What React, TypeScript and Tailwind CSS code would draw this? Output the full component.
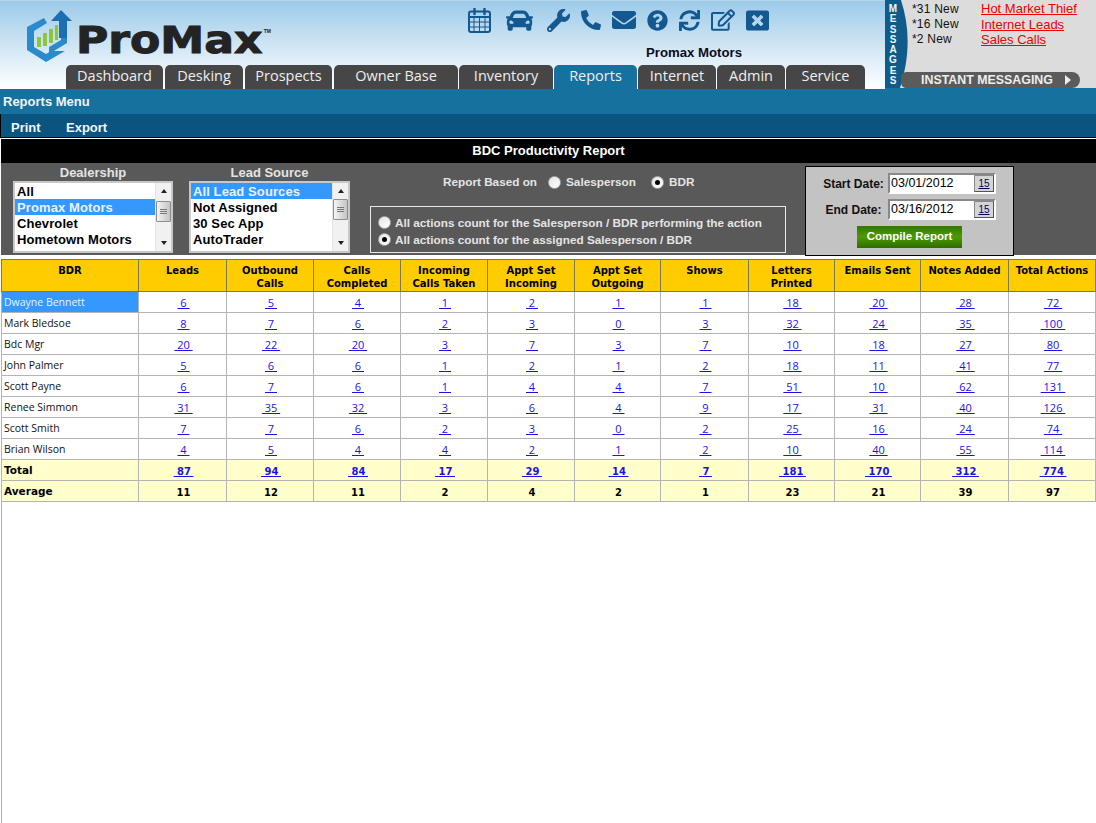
import { FaCar, FaWrench, FaPhoneAlt, FaEnvelope, FaQuestionCircle, FaSync, FaRegEdit, FaWindowClose } from "react-icons/fa";

const tabs = [
  { label: "Dashboard", w: "w-[97px] mr-px" },
  { label: "Desking", w: "w-[78px] mr-px" },
  { label: "Prospects", w: "w-[87px] mr-px" },
  { label: "Owner Base", w: "w-[124px]" },
  { label: "Inventory", w: "w-[94px]" },
  { label: "Reports", w: "w-[83px]", active: true },
  { label: "Internet", w: "w-[78px]" },
  { label: "Admin", w: "w-[68px]" },
  { label: "Service", w: "w-[79px]" },
];

const columns = [
  ["BDR", "w-[137px]"],
  ["Leads", "w-[88px]"],
  ["Outbound\nCalls", "w-[87px]"],
  ["Calls\nCompleted", "w-[87px]"],
  ["Incoming\nCalls Taken", "w-[87px]"],
  ["Appt Set\nIncoming", "w-[87px]"],
  ["Appt Set\nOutgoing", "w-[86px]"],
  ["Shows", "w-[88px]"],
  ["Letters\nPrinted", "w-[86px]"],
  ["Emails Sent", "w-[86px]"],
  ["Notes Added", "w-[88px]"],
  ["Total Actions", "w-[87px]"],
];

const rows: [string, number[]][] = [
  ["Dwayne Bennett", [6, 5, 4, 1, 2, 1, 1, 18, 20, 28, 72]],
  ["Mark Bledsoe", [8, 7, 6, 2, 3, 0, 3, 32, 24, 35, 100]],
  ["Bdc Mgr", [20, 22, 20, 3, 7, 3, 7, 10, 18, 27, 80]],
  ["John Palmer", [5, 6, 6, 1, 2, 1, 2, 18, 11, 41, 77]],
  ["Scott Payne", [6, 7, 6, 1, 4, 4, 7, 51, 10, 62, 131]],
  ["Renee Simmon", [31, 35, 32, 3, 6, 4, 9, 17, 31, 40, 126]],
  ["Scott Smith", [7, 7, 6, 2, 3, 0, 2, 25, 16, 24, 74]],
  ["Brian Wilson", [4, 5, 4, 4, 2, 1, 2, 10, 40, 55, 114]],
];

const totals = [87, 94, 84, 17, 29, 14, 7, 181, 170, 312, 774];
const averages = [11, 12, 11, 2, 4, 2, 1, 23, 21, 39, 97];

function Logo() {
  return (
    <svg width="50" height="54" viewBox="0 0 50 54" className="shrink-0">
      <path d="M19 8 L2 17 L2 40 L21 52 L40 41 L26 41 L21 44 L9 37 L9 21 L22 13 Z" fill="#2a8acb" />
      <path d="M24 44 L42 33 L42 15 L36 15 L36 30 L24 37 Z" fill="#2a8acb" />
      <path d="M36 0 L47 11 L42 11 L42 28 L34 28 L34 11 L26 11 Z" fill="#1c70b2" />
      <rect x="12" y="27" width="4" height="10" fill="#8cc63f" />
      <rect x="18" y="23" width="4" height="13" fill="#8cc63f" />
      <rect x="24" y="19" width="4" height="14" fill="#8cc63f" />
      <rect x="30" y="15" width="3" height="15" fill="#8cc63f" />
    </svg>
  );
}

function CalendarIcon() {
  return (
    <svg width="23" height="25" viewBox="0 0 23 25" className="shrink-0" fill="none" stroke="#13588f">
      <rect x="1" y="3.5" width="21" height="20.5" rx="2" strokeWidth="2" />
      <path d="M1 9 H22" strokeWidth="2" />
      <path d="M1 14 H22 M1 19 H22 M6 9 V24 M11.5 9 V24 M17 9 V24" strokeWidth="1" />
      <path d="M6.5 1 V6 M16.5 1 V6" strokeWidth="2.5" strokeLinecap="round" />
    </svg>
  );
}

function Scrollbar({ thumb }: { thumb: string }) {
  return (
    <div className="w-[16px] h-full flex flex-col justify-between bg-[#f1f1f1] border-l border-[#e4e4e4]">
      <div className="h-[16px] flex items-center justify-center">
        <div className="w-0 h-0 border-x-[3px] border-x-transparent border-b-[4px] border-b-[#222]" />
      </div>
      <div className="flex-1 relative">
        <div className={`absolute left-0 right-0 h-[21px] bg-gradient-to-r from-[#f4f4f4] to-[#c4c4c4] border border-[#8e8e8e] rounded-[1px] flex flex-col items-center justify-center gap-[1px] ${thumb}`}>
          <div className="w-[7px] h-px bg-[#777]" />
          <div className="w-[7px] h-px bg-[#777]" />
          <div className="w-[7px] h-px bg-[#777]" />
        </div>
      </div>
      <div className="h-[16px] flex items-center justify-center">
        <div className="w-0 h-0 border-x-[3px] border-x-transparent border-t-[4px] border-t-[#222]" />
      </div>
    </div>
  );
}

function ListBox({ items, selected, thumb }: { items: string[]; selected: number; thumb: string }) {
  return (
    <div className="h-[72px] bg-white border-2 border-[#c8c8c8] flex overflow-hidden">
      <div className="flex-1 overflow-hidden">
        {items.map((item, i) => (
          <div
            key={item}
            className={`h-[16px] pt-px leading-[15px] px-[2px] text-[13px] tracking-[0.1px] font-bold whitespace-nowrap ${i === selected ? "bg-[#3399ff] text-[#e8f2ff]" : "text-black"}`}
          >
            {item}
          </div>
        ))}
      </div>
      <Scrollbar thumb={thumb} />
    </div>
  );
}

function Radio({ on }: { on?: boolean }) {
  return (
    <span className="w-[13px] h-[13px] rounded-full bg-gradient-to-br from-[#e4e4e4] to-white border border-[#a8a8a8] flex items-center justify-center shrink-0">
      {on && <span className="w-[5px] h-[5px] rounded-full bg-black" />}
    </span>
  );
}

function DateField({ label, value }: { label: string; value: string }) {
  return (
    <div className="flex items-center h-[21px]">
      <span className="w-[65px] mr-[2px] text-center text-[12px] font-bold text-[#111]">{label}</span>
      <div className="w-[108px] h-[21px] bg-white border-2 border-t-[#888] border-l-[#888] border-r-white border-b-white flex items-center justify-between">
        <span className="text-[12.5px] pl-px text-black">{value}</span>
        <span className="w-[20px] h-[17px] bg-[#d4d4d4] border border-[#888] border-r-[#555] border-b-[#555] flex items-center justify-center text-[10px] underline text-[#000050]">
          15
        </span>
      </div>
    </div>
  );
}

function CountLink({ value }: { value: number }) {
  return <a className="underline text-[#1c12e6] cursor-pointer whitespace-pre">{` ${value} `}</a>;
}

export default function App() {
  return (
    <div className="w-[1096px] h-[823px] overflow-hidden bg-white font-['Liberation_Sans',Arial,sans-serif] flex flex-col">
      <header className="h-[88px] flex shrink-0">
        <div className="w-[885px] h-[89px] flex flex-col bg-gradient-to-b from-[#9ccae9] via-[#cfe5f4] to-white border-t border-[#b7d6ee] z-10">
          <div className="h-[64px] flex relative">
            <div className="w-[446px] pl-[25px] pt-[9px] flex">
              <Logo />
              <div className="flex items-start">
                <span className="ml-[1px] mt-[8px] origin-left scale-x-[1.16] text-[38px] leading-[44px] font-bold text-[#232323] [-webkit-text-stroke:1px_#232323] font-['DejaVu_Sans',sans-serif]">ProMax</span>
                <span className="ml-[27px] mt-[18px] text-[5px] font-bold text-[#232323]">TM</span>
              </div>
            </div>
            <div className="flex-1 flex flex-col">
              <div className="flex items-center h-[24px] mt-[7px] pl-[22px] text-[#13588f]">
                <CalendarIcon />
                <FaCar className="w-[27px] h-[27px] ml-[15px] shrink-0" />
                <FaWrench className="w-[23px] h-[23px] ml-[14px]" />
                <FaPhoneAlt className="w-[20px] h-[20px] ml-[11px]" />
                <FaEnvelope className="w-[24px] h-[24px] ml-[11px]" />
                <FaQuestionCircle className="w-[21px] h-[21px] ml-[11px]" />
                <FaSync className="w-[21px] h-[21px] ml-[11px]" />
                <FaRegEdit className="w-[24px] h-[22px] ml-[11px]" />
                <FaWindowClose className="w-[23px] h-[25px] ml-[11px]" />
              </div>
              <div className="mt-[11px] ml-[200px] text-[13.2px] font-bold text-[#0c0c20] whitespace-nowrap">Promax Motors</div>
            </div>
          </div>
          <nav className="h-[24px] pl-[66px] flex gap-px font-['Open_Sans',sans-serif]">
            {tabs.map((tab) => (
              <div
                key={tab.label}
                className={`${tab.w} h-full pb-[2px] rounded-t-[5px] flex items-center justify-center text-[14.5px] text-[#eeeeee] ${tab.active ? "bg-[#17719f]" : "bg-[#464646]"}`}
              >
                {tab.label}
              </div>
            ))}
          </nav>
        </div>
        <aside className="flex-1 relative bg-[#dcdcdc] flex flex-col">
          <svg width="24" height="88" viewBox="0 0 24 88" className="absolute left-0 top-0">
            <path d="M0 0 H16 C25 28 25 56 15 88 H0 Z" fill="#0f5c8a" />
          </svg>
          <div className="absolute left-0 top-[4px] w-[16px] flex flex-col items-center text-[10px] leading-[10.3px] font-bold text-[#eef6fb]">
            {"MESSAGES".split("").map((c, i) => (
              <span key={i}>{c}</span>
            ))}
          </div>
          <div className="h-[72px] pl-[27px] pt-[2px] flex text-[12px] leading-[15px]">
            <div className="w-[69px] text-[#111] tracking-[0.2px]">
              <div>*31 New</div>
              <div>*16 New</div>
              <div>*2 New</div>
            </div>
            <div className="-mt-px text-[13px] leading-[15.5px] text-[#ee0000] underline">
              <div>Hot Market Thief</div>
              <div>Internet Leads</div>
              <div>Sales Calls</div>
            </div>
          </div>
          <div className="relative ml-[16px] w-[179px] h-[16px] bg-[#5b5b5b] rounded-r-[9px] rounded-l-[6px] flex items-center pl-[20px] text-[12.4px] font-bold text-[#eeeeee] whitespace-nowrap">
            INSTANT MESSAGING
            <span className="ml-[12px] w-0 h-0 border-y-[5px] border-y-transparent border-l-[6px] border-l-[#eeeeee]" />
          </div>
        </aside>
      </header>

      <div className="h-[26px] shrink-0 pt-px bg-[#17719f] pl-[3px] flex items-center text-[13px] font-bold text-[#eef6fb]">Reports Menu</div>
      <div className="h-[23px] shrink-0 pt-[5px] bg-[#0a5580] border-l border-black flex items-center pl-[10px] gap-[25px] text-[13px] font-bold text-[#eef6fb]">
        <span className="w-[30px]">Print</span>
        <span>Export</span>
      </div>
      <div className="h-px shrink-0 bg-black" />

      <main className="flex-1 pl-px flex flex-col">
        <div className="mt-px h-[24px] shrink-0 bg-black text-white text-[13px] font-bold flex items-center justify-center">BDC Productivity Report</div>
        <div className="h-[92px] shrink-0 bg-[#595959] flex pl-[12px]">
          <div className="w-[160px] pt-[2px]">
            <div className="h-[16px] text-center text-[13px] leading-[16px] font-bold text-[#e4e4e4]">Dealership</div>
            <ListBox items={["All", "Promax Motors", "Chevrolet", "Hometown Motors", "Honda"]} selected={1} thumb="top-[2px]" />
          </div>
          <div className="w-[161px] ml-[16px] pt-[2px]">
            <div className="h-[16px] text-center text-[13px] leading-[16px] font-bold text-[#e4e4e4]">Lead Source</div>
            <ListBox items={["All Lead Sources", "Not Assigned", "30 Sec App", "AutoTrader", "Autotrader Cert"]} selected={0} thumb="top-0" />
          </div>
          <div className="w-[416px] ml-[20px] flex flex-col text-[11.75px] font-bold text-[#e4e4e4]">
            <div className="h-[43px] pl-[73px] flex items-center pb-[5px]">
              <span>Report Based on</span>
              <span className="ml-[11px]"><Radio /></span>
              <span className="ml-[5px]">Salesperson</span>
              <span className="ml-[15px]"><Radio on /></span>
              <span className="ml-[5px]">BDR</span>
            </div>
            <div className="h-[47px] border border-[#e8e8e8] pl-[7px] pt-[9px] flex flex-col gap-[4px]">
              <div className="flex items-center gap-[4px] h-[13px]"><Radio />All actions count for the Salesperson / BDR performing the action</div>
              <div className="flex items-center gap-[4px] h-[13px]"><Radio on />All actions count for the assigned Salesperson / BDR</div>
            </div>
          </div>
          <div className="w-[209px] h-[90px] mt-[3px] ml-[19px] bg-[#c3c3c3] border border-black flex flex-col items-center pt-[6px]">
            <div className="pr-[2px] flex flex-col gap-[5px]">
              <DateField label="Start Date:" value="03/01/2012" />
              <DateField label="End Date:" value="03/16/2012" />
            </div>
            <div className="mt-[6px] w-[105px] h-[22px] bg-gradient-to-b from-[#2f7a00] via-[#4f9a00] to-[#2a6e00] flex items-center justify-center text-[11.5px] font-bold text-white">
              Compile Report
            </div>
          </div>
        </div>
        <div className="h-[4px] shrink-0" />
        <table className="table-fixed w-[1095px] border-collapse shrink-0 text-[11px] font-['DejaVu_Sans',sans-serif]">
          <colgroup>
            {columns.map(([label, w]) => (
              <col key={label} className={w} />
            ))}
          </colgroup>
          <thead>
            <tr className="h-[32px]">
              {columns.map(([label]) => (
                <th key={label} className="bg-[#ffcc00] border border-[#7a7a5a] align-top pt-[4px] px-[2px] text-[10px] leading-[13px] font-bold text-black whitespace-pre-line">
                  {label}
                </th>
              ))}
            </tr>
          </thead>
          <tbody className="font-['Open_Sans',sans-serif]">
            {rows.map(([name, values], i) => (
              <tr key={name} className="h-[21px]">
                <td className={`border border-[#b4b4b4] pl-[2px] pt-[2px] text-[10.5px] ${i === 0 ? "bg-[#3399ff] text-[#e6f2ff]" : "text-[#111]"}`}>{name}</td>
                {values.map((v, j) => (
                  <td key={j} className="border border-[#b4b4b4] pl-[2px] pt-[2px] text-center text-[11px]">
                    <CountLink value={v} />
                  </td>
                ))}
              </tr>
            ))}
            <tr className="h-[21px] bg-[#ffffcc] font-['DejaVu_Sans',sans-serif] font-bold [word-spacing:-1px]">
              <td className="border border-[#b4b4b4] pl-[2px] pt-[2px] text-[10.5px] text-black">Total</td>
              {totals.map((v, j) => (
                <td key={j} className="border border-[#b4b4b4] pl-[2px] pt-[2px] text-center text-[10px]">
                  <CountLink value={v} />
                </td>
              ))}
            </tr>
            <tr className="h-[21px] bg-[#ffffcc] font-['DejaVu_Sans',sans-serif] font-bold">
              <td className="border border-[#b4b4b4] pl-[2px] pt-[2px] text-[10.5px] text-black">Average</td>
              {averages.map((v, j) => (
                <td key={j} className="border border-[#b4b4b4] pl-[2px] pt-[2px] text-center text-[10px] text-black">
                  {v}
                </td>
              ))}
            </tr>
          </tbody>
        </table>
        <div className="flex-1 border-l border-[#b0b0b0]" />
      </main>
    </div>
  );
}
